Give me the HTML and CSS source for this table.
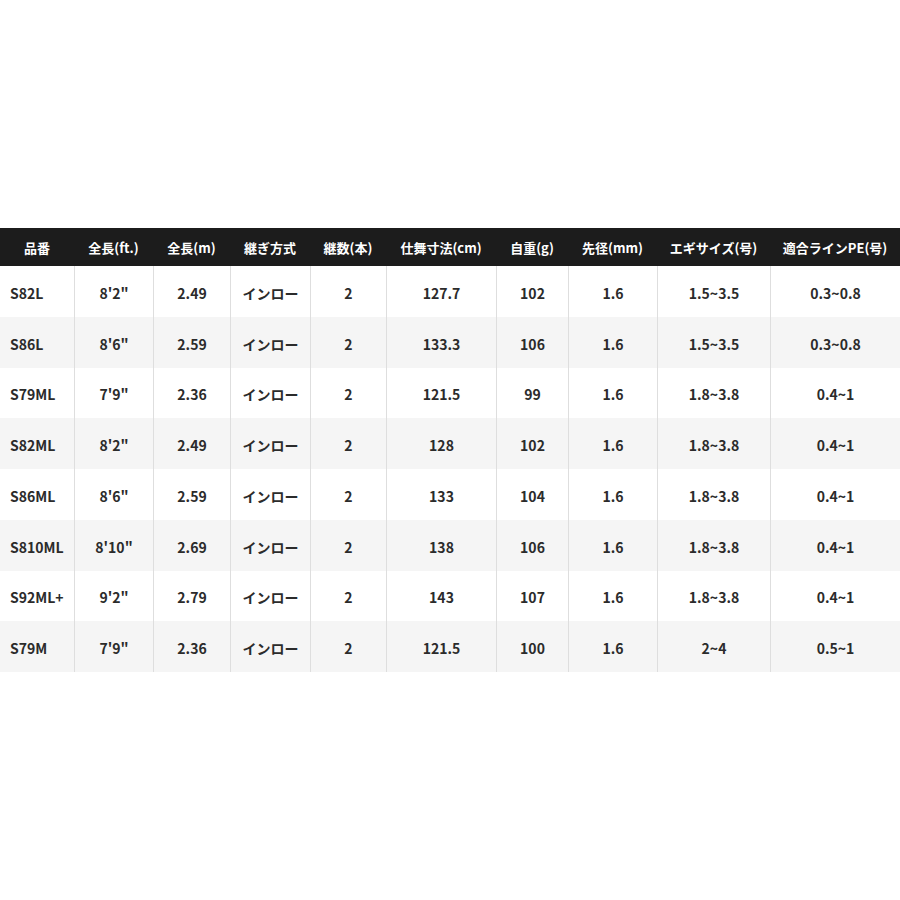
FILE: index.html
```html
<!DOCTYPE html>
<html lang="ja">
<head>
<meta charset="utf-8">
<link rel="stylesheet" href="styles.css">
</head>
<body>
<div class="page">
<table class="spec">
<colgroup>
<col class="c1"><col class="c2"><col class="c3"><col class="c4"><col class="c5"><col class="c6"><col class="c7"><col class="c8"><col class="c9"><col class="c10">
</colgroup>
<thead>
<tr><th>品番</th><th>全長(ft.)</th><th>全長(m)</th><th>継ぎ方式</th><th>継数(本)</th><th>仕舞寸法(cm)</th><th>自重(g)</th><th>先径(mm)</th><th>エギサイズ(号)</th><th>適合ラインPE(号)</th></tr>
</thead>
<tbody>
<tr><td>S82L</td><td>8'2"</td><td>2.49</td><td>インロー</td><td>2</td><td>127.7</td><td>102</td><td>1.6</td><td>1.5~3.5</td><td>0.3~0.8</td></tr>
<tr><td>S86L</td><td>8'6"</td><td>2.59</td><td>インロー</td><td>2</td><td>133.3</td><td>106</td><td>1.6</td><td>1.5~3.5</td><td>0.3~0.8</td></tr>
<tr><td>S79ML</td><td>7'9"</td><td>2.36</td><td>インロー</td><td>2</td><td>121.5</td><td>99</td><td>1.6</td><td>1.8~3.8</td><td>0.4~1</td></tr>
<tr><td>S82ML</td><td>8'2"</td><td>2.49</td><td>インロー</td><td>2</td><td>128</td><td>102</td><td>1.6</td><td>1.8~3.8</td><td>0.4~1</td></tr>
<tr><td>S86ML</td><td>8'6"</td><td>2.59</td><td>インロー</td><td>2</td><td>133</td><td>104</td><td>1.6</td><td>1.8~3.8</td><td>0.4~1</td></tr>
<tr><td>S810ML</td><td>8'10"</td><td>2.69</td><td>インロー</td><td>2</td><td>138</td><td>106</td><td>1.6</td><td>1.8~3.8</td><td>0.4~1</td></tr>
<tr><td>S92ML+</td><td>9'2"</td><td>2.79</td><td>インロー</td><td>2</td><td>143</td><td>107</td><td>1.6</td><td>1.8~3.8</td><td>0.4~1</td></tr>
<tr><td>S79M</td><td>7'9"</td><td>2.36</td><td>インロー</td><td>2</td><td>121.5</td><td>100</td><td>1.6</td><td>2~4</td><td>0.5~1</td></tr>
</tbody>
</table>
</div>
</body>
</html>
```
FILE: styles.css
```css
html, body {
  margin: 0;
  padding: 0;
  background: #ffffff;
}
.page {
  width: 900px;
  height: 900px;
  padding-top: 228px;
  box-sizing: border-box;
  font-family: "Noto Sans CJK JP", "Noto Sans", sans-serif;
}
.spec {
  width: 900px;
  table-layout: fixed;
  border-collapse: separate;
  border-spacing: 0;
}
.c1 { width: 74px; }
.c2 { width: 79px; }
.c3 { width: 77px; }
.c4 { width: 80px; }
.c5 { width: 76px; }
.c6 { width: 110px; }
.c7 { width: 72px; }
.c8 { width: 89px; }
.c9 { width: 113px; }
.c10 { width: 130px; }
.spec th {
  background: #1c1c1c;
  color: #ffffff;
  font-size: 13px;
  font-weight: 700;
  height: 38px;
  padding: 0;
  text-align: center;
  white-space: nowrap;
}
.spec td {
  height: 50.75px;
  padding: 3px 0 0;
  box-sizing: border-box;
  font-size: 14px;
  font-weight: 700;
  color: #2b2b2b;
  text-align: center;
  white-space: nowrap;
  border-left: 1px solid #dedede;
}
.spec td:first-child {
  border-left: none;
  text-align: left;
  padding-left: 10px;
}
.spec tbody tr:nth-child(even) td {
  background: #f5f5f5;
}
```
